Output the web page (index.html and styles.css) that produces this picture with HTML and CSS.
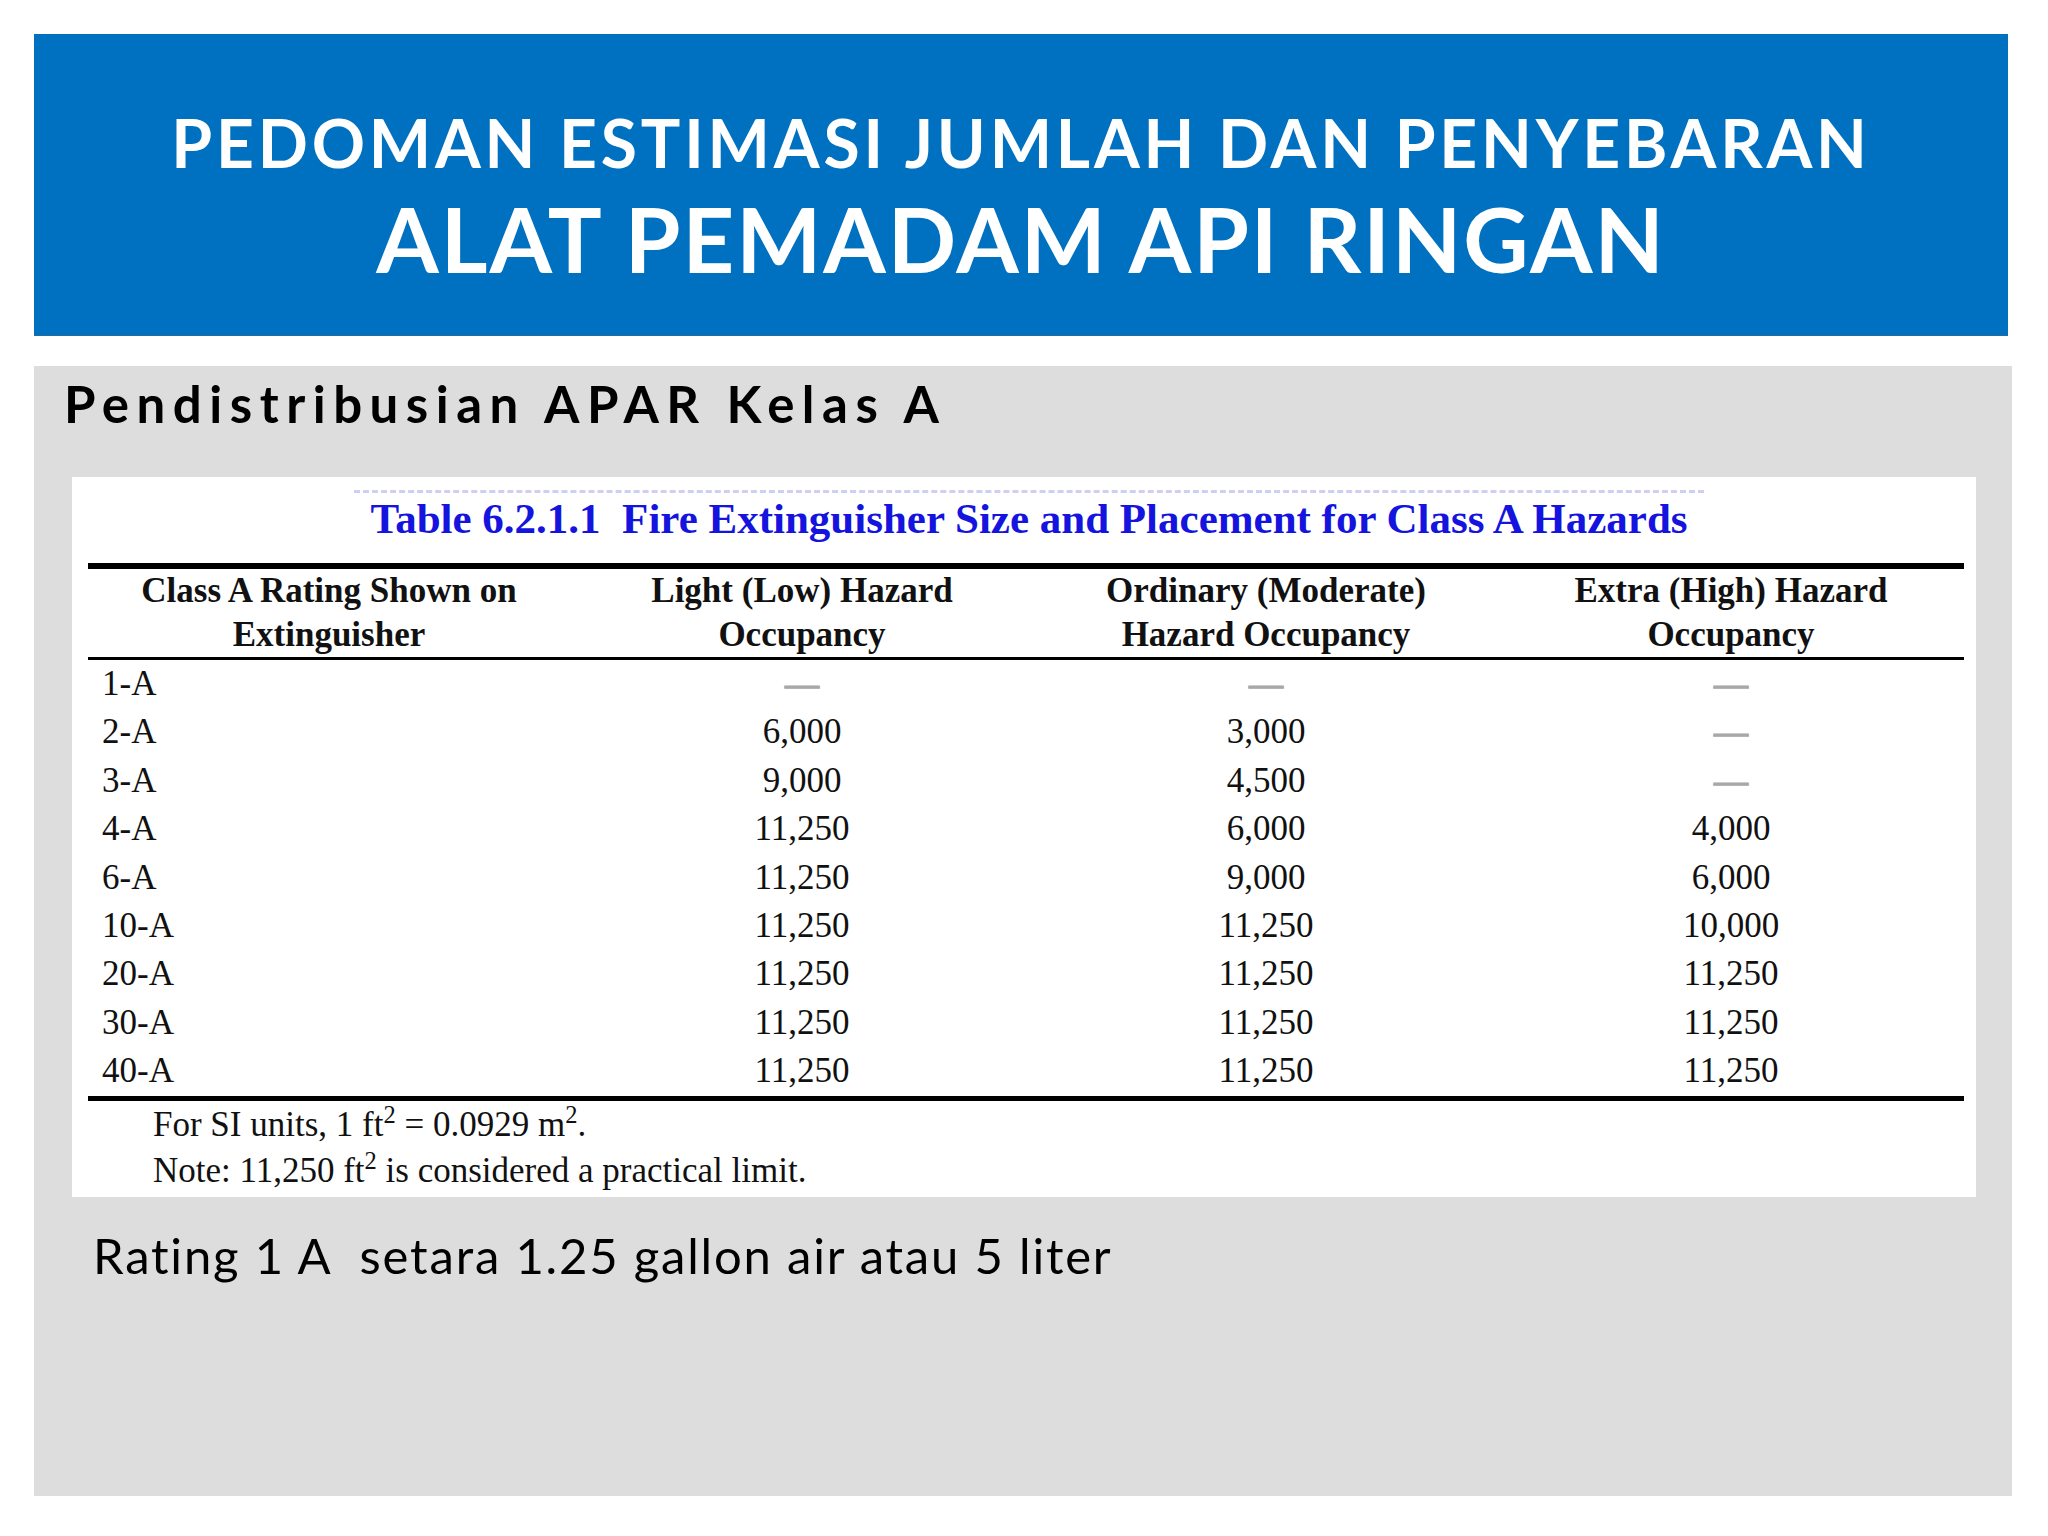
FILE: index.html
```html
<!DOCTYPE html>
<html lang="id">
<head>
<meta charset="utf-8">
<title>Pedoman Estimasi Jumlah dan Penyebaran APAR</title>
<link rel="stylesheet" href="styles.css">
</head>
<body>
<div class="page">
  <header class="banner">
    <div class="banner-line1">PEDOMAN ESTIMASI JUMLAH DAN PENYEBARAN</div>
    <div class="banner-line2">ALAT PEMADAM API RINGAN</div>
  </header>

  <section class="content">
    <h2 class="subtitle">Pendistribusian APAR Kelas A</h2>

    <div class="table-box">
      <div class="cutoff"></div>
      <div class="table-title">Table 6.2.1.1&nbsp;&nbsp;Fire Extinguisher Size and Placement for Class A Hazards</div>

      <div class="nfpa">
        <div class="row head">
          <div class="cell c1">Class A Rating Shown on<br>Extinguisher</div>
          <div class="cell">Light (Low) Hazard<br>Occupancy</div>
          <div class="cell">Ordinary (Moderate)<br>Hazard Occupancy</div>
          <div class="cell">Extra (High) Hazard<br>Occupancy</div>
        </div>
        <div class="body">
          <div class="row"><div class="cell c1">1-A</div><div class="cell dash">—</div><div class="cell dash">—</div><div class="cell dash">—</div></div>
          <div class="row"><div class="cell c1">2-A</div><div class="cell">6,000</div><div class="cell">3,000</div><div class="cell dash">—</div></div>
          <div class="row"><div class="cell c1">3-A</div><div class="cell">9,000</div><div class="cell">4,500</div><div class="cell dash">—</div></div>
          <div class="row"><div class="cell c1">4-A</div><div class="cell">11,250</div><div class="cell">6,000</div><div class="cell">4,000</div></div>
          <div class="row"><div class="cell c1">6-A</div><div class="cell">11,250</div><div class="cell">9,000</div><div class="cell">6,000</div></div>
          <div class="row"><div class="cell c1">10-A</div><div class="cell">11,250</div><div class="cell">11,250</div><div class="cell">10,000</div></div>
          <div class="row"><div class="cell c1">20-A</div><div class="cell">11,250</div><div class="cell">11,250</div><div class="cell">11,250</div></div>
          <div class="row"><div class="cell c1">30-A</div><div class="cell">11,250</div><div class="cell">11,250</div><div class="cell">11,250</div></div>
          <div class="row"><div class="cell c1">40-A</div><div class="cell">11,250</div><div class="cell">11,250</div><div class="cell">11,250</div></div>
        </div>
        <div class="notes">
          <p>For SI units, 1 ft<sup>2</sup> = 0.0929 m<sup>2</sup>.</p>
          <p>Note: 11,250 ft<sup>2</sup> is considered a practical limit.</p>
        </div>
      </div>
    </div>

    <p class="rating">Rating 1 A&nbsp; setara 1.25 gallon air atau 5 liter</p>
  </section>
</div>
</body>
</html>
```

FILE: styles.css
```css
* { box-sizing: border-box; }

html, body {
  margin: 0;
  padding: 0;
  background: #ffffff;
}

.page {
  width: 2048px;
  height: 1536px;
  padding: 34px 0 0 34px;
  display: flex;
  flex-direction: column;
  font-family: "Lato", "Open Sans", sans-serif;
}

/* ---------- blue banner ---------- */
.banner {
  width: 1974px;
  height: 301px;
  background: #0070c0;
  color: #ffffff;
  display: flex;
  flex-direction: column;
  align-items: center;
  padding-top: 76px;
  box-shadow: 0 1px 0 #2a6a9a;
}

.banner-line1 {
  font-size: 66px;
  line-height: 66px;
  font-weight: 700;
  letter-spacing: 3.8px;
  white-space: nowrap;
}

.banner-line2 {
  margin-top: 16px;
  font-size: 90px;
  line-height: 92px;
  font-weight: 700;
  letter-spacing: 2px;
  white-space: nowrap;
}

/* ---------- grey content ---------- */
.content {
  margin-top: 31px;
  width: 1978px;
  height: 1130px;
  background: #dddddd;
  padding: 12px 0 0 38px;
  display: flex;
  flex-direction: column;
}

.subtitle {
  margin: 0 0 0 -8px;
  font-size: 51px;
  line-height: 51px;
  font-weight: 700;
  letter-spacing: 7.5px;
  color: #000000;
  white-space: nowrap;
}

/* ---------- table picture ---------- */
.table-box {
  margin-top: 48px;
  width: 1904px;
  height: 720px;
  background: #ffffff;
  padding: 13px 12px 0 16px;
  font-family: "Liberation Serif", "Times New Roman", serif;
  color: #111111;
}

.cutoff {
  margin-left: 266px;
  width: 1350px;
  height: 0;
  border-top: 3px dashed #cfcff2;
}

.table-title {
  margin-top: 5px;
  text-align: center;
  font-size: 43px;
  line-height: 42px;
  font-weight: 700;
  color: #1414de;
  padding-left: 6px;
  white-space: nowrap;
}

.nfpa {
  margin-top: 23px;
  border-top: 6px solid #000000;
}

.row {
  display: grid;
  grid-template-columns: 482px 464px 464px 466px;
  font-size: 35px;
  height: 48.4px;
  line-height: 48.4px;
}

.row.head {
  height: auto;
  line-height: 44px;
  font-weight: 700;
  padding-bottom: 0;
  border-bottom: 3px solid #000000;
}

.cell {
  text-align: center;
  white-space: nowrap;
}

.body .c1 {
  text-align: left;
  padding-left: 14px;
}

.dash {
  color: #a8a8a8;
  font-weight: 700;
  text-shadow: 0 1px 0 #b4b4b4;
}

.body {
  border-bottom: 5px solid #000000;
}

.notes {
  padding: 1px 0 0 65px;
  font-size: 35px;
  line-height: 46px;
}

.notes p {
  margin: 0;
  white-space: nowrap;
}

.notes sup {
  font-size: 0.7em;
  line-height: 0;
  vertical-align: 0.55em;
}

/* ---------- bottom line ---------- */
.rating {
  margin: 34px 0 0 21px;
  font-size: 49px;
  line-height: 48px;
  font-weight: 400;
  letter-spacing: 1.8px;
  color: #000000;
  white-space: nowrap;
}
```
